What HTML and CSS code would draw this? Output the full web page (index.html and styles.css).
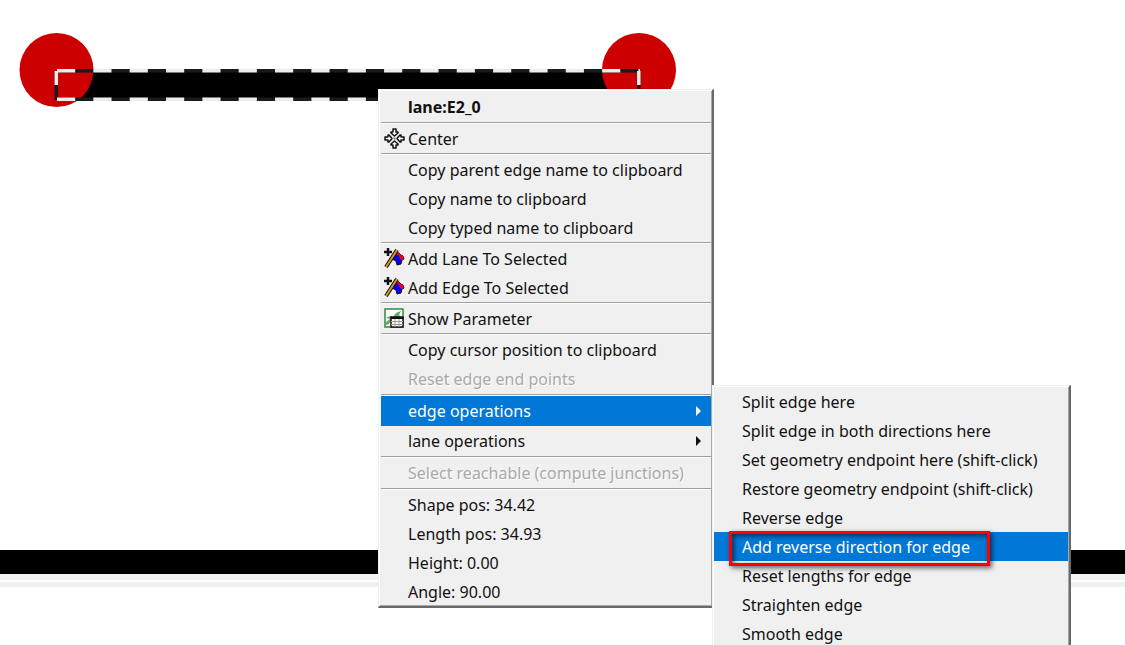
FILE: index.html
```
<!DOCTYPE html>
<html lang="en">
<head>
<meta charset="utf-8">
<title>lane:E2_0</title>
<link rel="stylesheet" href="styles.css">
</head>
<body>
    <!-- shared icons -->
    <svg class="defs" width="0" height="0" aria-hidden="true">
        <symbol id="icon-center" viewBox="0 0 21 21">
            <g fill="#fff" stroke="#111" stroke-width="1.500" stroke-linejoin="round">
                <path id="arrow" d="M9 1h3v3h2v1L10.500 8 7 5V4h2z"/>
                <use href="#arrow" transform="rotate(90 10.500 10.500)"/>
                <use href="#arrow" transform="rotate(180 10.500 10.500)"/>
                <use href="#arrow" transform="rotate(270 10.500 10.500)"/>
            </g>
            <path d="M9.500 9.500h2v2h-2z" fill="#777"/>
        </symbol>
        <symbol id="icon-flag" viewBox="0 0 21 21">
            <path d="M12 4l3 1 2 2 2 1 1 3-2 1-1 4-4 1-1-4-4-2z" fill="#00f" stroke="#111"/>
            <path d="M12 3l3 2 2 2 2 1 1 3-2 1-2-1-1-3-3-2z" fill="#f00018"/>
            <path d="M13 2L2 19" stroke="#111" stroke-width="4"/>
            <path d="M13 2L2 19" stroke="#d29a20" stroke-width="2"/>
            <path d="M4 0v8M0 4h8" stroke="#111" stroke-width="2.500"/>
        </symbol>
        <symbol id="icon-param" viewBox="0 0 21 21">
            <path d="M1 1h18v18H1z" fill="#fff" stroke="#318b3d" stroke-width="1.500"/>
            <path d="M2 17v-3l4-3-4-1 4-2 3 1 3-4 5-2-2 4 2 2-6 2-4 1-2 4z" fill="#66a56c"/>
            <path d="M7 9h12v10H7z" fill="#fff" stroke="#111" stroke-width="1.500"/>
            <path d="M7 9h12v2H7z" fill="#111"/>
            <path d="M11 11v8M15 11v8M7 13.500h12M7 16.500h12" stroke="#999"/>
        </symbol>
    </svg>

    <div class="stage">
        <div class="road"></div>

        <!-- selected edge with its two junctions -->
        <svg class="edge" width="700" height="120" viewBox="0 0 700 120">
            <path d="M57 69h583v32H57z"/>
            <circle cx="56.500" cy="70" r="37" fill="#c00"/>
            <path d="M94 69v32H80q12-12 14-32z"/>
            <circle cx="639" cy="70" r="37" fill="#c00"/>
            <g fill="none" stroke="#1a1a1a" stroke-width="3.500">
                <path d="M57 70.800h583M57 99.300h583M56.300 71v29M638.800 71v29"/>
                <g stroke="#ececec">
                    <path d="M57 70.800h583M57 99.300h583" stroke-dasharray="18.170"/>
                    <path d="M56.300 71v14M638.800 71v14"/>
                </g>
            </g>
        </svg>

        <div class="menu main-menu">
            <div class="title">lane:E2_0</div>
            <hr>
            <button><svg class="icon"><use href="#icon-center"/></svg>Center</button>
            <hr>
            <button>Copy parent edge name to clipboard</button>
            <button>Copy name to clipboard</button>
            <button>Copy typed name to clipboard</button>
            <hr>
            <button><svg class="icon"><use href="#icon-flag"/></svg>Add Lane To Selected</button>
            <button><svg class="icon"><use href="#icon-flag"/></svg>Add Edge To Selected</button>
            <hr>
            <button><svg class="icon"><use href="#icon-param"/></svg>Show Parameter</button>
            <hr>
            <button>Copy cursor position to clipboard</button>
            <button disabled>Reset edge end points</button>
            <hr>
            <button class="cascade active">edge operations</button>
            <button class="cascade">lane operations</button>
            <hr>
            <button disabled>Select reachable (compute junctions)</button>
            <hr>
            <button>Shape pos: 34.42</button>
            <button>Length pos: 34.93</button>
            <button>Height: 0.00</button>
            <button>Angle: 90.00</button>
        </div>

        <div class="menu sub-menu">
            <button>Split edge here</button>
            <button>Split edge in both directions here</button>
            <button>Set geometry endpoint here (shift-click)</button>
            <button>Restore geometry endpoint (shift-click)</button>
            <button>Reverse edge</button>
            <button class="active marked">Add reverse direction for edge</button>
            <button>Reset lengths for edge</button>
            <button>Straighten edge</button>
            <button>Smooth edge</button>
        </div>
    </div>
</body>
</html>
```
FILE: styles.css
```
body {
    margin: 0;
    background: #fff;
    color: #111;
    font-family: "Noto Sans", "Open Sans", sans-serif;
    font-size: 16px;
}
.defs {
    position: absolute;
}
.stage {
    position: relative;
    height: 100vh;
    overflow: hidden;
}

/* road across the canvas */
.road {
    position: absolute;
    top: 550px;
    left: 0;
    right: 0;
    height: 24px;
    background: #000;
    box-shadow: 0 6px #f3f3f3, 0 8px #fff, 0 13px #f0f0f0;
}
.edge {
    position: absolute;
    top: 0;
    left: 0;
}

/* popup menus */
.menu {
    position: absolute;
    box-sizing: border-box;
    display: flex;
    flex-direction: column;
    background: #f0f0f0;
    border: 1px solid #f0f0f0;
    border-right: 2px solid #696969;
    border-bottom: 2px solid #696969;
    box-shadow: inset 1px 1px #fff, inset -1px -1px #a8a8a8;
}
.main-menu {
    top: 89px;
    left: 378px;
    width: 336px;
    padding: 2px 1px 0 2px;
}
.sub-menu {
    top: 385px;
    left: 712px;
    width: 359px;
    padding: 1px 1px 8px 1px;
}
.menu button,
.title {
    position: relative;
    display: flex;
    align-items: center;
    box-sizing: border-box;
    height: 29px;
    margin: 0;
    padding: 0 0 0 27px;
    border: 0;
    background: none;
    color: inherit;
    font: inherit;
    text-align: left;
    white-space: nowrap;
}
.menu .title {
    height: 30px;
    font-weight: bold;
}
.menu button:disabled {
    height: 30px;
    color: #a9a9a9;
    text-shadow: 1px 1px #fff;
}
.menu hr {
    width: 100%;
    height: 1px;
    margin: 0;
    border: 0;
    border-bottom: 1px solid #fff;
    background: #a0a0a0;
}
.menu .active {
    background: #0078d7;
    color: #fff;
}
.icon {
    position: absolute;
    left: 3px;
    width: 21px;
    height: 21px;
}
.menu .cascade {
    height: 30px;
    justify-content: space-between;
    padding-right: 10px;
}
.cascade::after {
    content: "";
    border: 5px solid transparent;
    border-left-color: currentColor;
    border-right: 0;
}
.sub-menu button {
    padding-left: 28px;
}

/* red frame round the chosen command */
.marked::after {
    content: "";
    position: absolute;
    z-index: 1;
    top: -1px;
    left: 15px;
    box-sizing: border-box;
    width: 261px;
    height: 35px;
    border: 3px solid #f00;
    box-shadow: 2px 2px 5px rgba(0, 0, 0, .6), inset 2px 2px 5px rgba(0, 0, 0, .6);
}
```
